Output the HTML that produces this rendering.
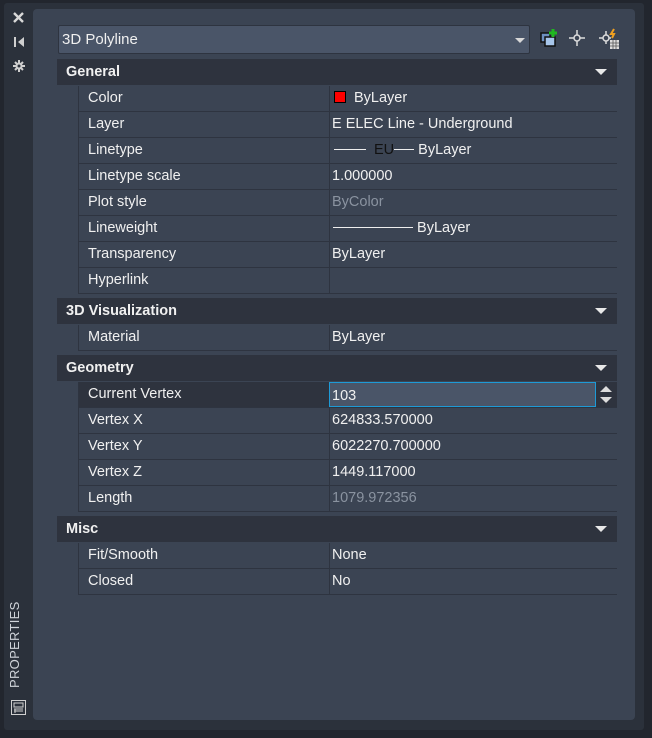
<!DOCTYPE html>
<html><head><style>
*{margin:0;padding:0;box-sizing:border-box}
body{width:652px;height:738px;background:#22262e;font-family:"Liberation Sans",sans-serif;font-size:14.5px;color:#f0f0f0;position:relative;overflow:hidden}
.strip{position:absolute;left:4px;top:3px;width:640px;height:727px;background:#2b313b;border-radius:3px}
.panel{position:absolute;left:33px;top:9px;width:602px;height:711px;background:#3b4453;border-radius:4px}
.a{position:absolute}
.hdr{position:absolute;left:57px;width:560px;height:26px;background:#2e333e;font-weight:bold;line-height:26px;padding-left:9px}
.hdr:after{content:"";position:absolute;right:10px;top:10px;border-left:6px solid transparent;border-right:6px solid transparent;border-top:6px solid #e8e8e8}
.row{position:absolute;left:78px;width:539px;height:26px;border-bottom:1px solid #2e3440;border-left:1px solid #2e3440}
.row .l{position:absolute;left:9px;top:4px}
.row .v{position:absolute;left:250px;top:0;height:25px;border-left:1px solid #2e3440;padding-left:2px;line-height:25px;width:289px}
.g{color:#8a93a0}
</style></head><body>
<div class="strip"></div>
<div class="panel"></div>
<svg class="a" style="left:12px;top:11px" width="14" height="14"><path d="M2 2L11 11M11 2L2 11" stroke="#d8d8d8" stroke-width="2.4"/></svg>
<svg class="a" style="left:13px;top:36px" width="12" height="12"><rect x="1" y="1" width="2" height="10" fill="#cfcfcf"/><path d="M11 1L5 6L11 11Z" fill="#cfcfcf"/></svg>
<svg class="a" style="left:12px;top:59px" width="14" height="14"><g stroke="#cfcfcf" stroke-width="2"><path d="M7 1V13M1 7H13M3 3L11 11M11 3L3 11"/></g><circle cx="7" cy="7" r="3.5" fill="#cfcfcf"/><circle cx="7" cy="7" r="1.5" fill="#2b313b"/></svg>
<div class="a" style="left:7px;top:688px;width:28px;transform:rotate(-90deg);transform-origin:0 0;font-size:13px;color:#d0d4da;letter-spacing:0.3px;white-space:nowrap">PROPERTIES</div>
<svg class="a" style="left:11px;top:700px" width="15" height="15"><rect x="0.5" y="0.5" width="14" height="14" fill="none" stroke="#cfcfcf"/><rect x="3" y="3" width="9" height="4" fill="none" stroke="#cfcfcf"/><path d="M3 9H12M3 11H12M4 9V13" stroke="#cfcfcf"/></svg>
<div class="a" style="left:58px;top:25px;width:472px;height:29px;background:#4a5568;border:1px solid #2e3440;border-radius:2px;line-height:28px;padding-left:3px;font-size:15px">3D Polyline</div>
<div class="a" style="left:515px;top:38px;border-left:5px solid transparent;border-right:5px solid transparent;border-top:5px solid #d8d8d8"></div>
<svg class="a" style="left:539px;top:28px" width="20" height="20"><rect x="2" y="5" width="9" height="9" fill="#6d8fbf" stroke="#111" stroke-width="1.5"/><rect x="6" y="9" width="10" height="9" fill="#a7c6ea" stroke="#111" stroke-width="1.5"/><path d="M14 1V9M10 5H18" stroke="#1fb81f" stroke-width="3"/></svg>
<svg class="a" style="left:568px;top:29px" width="18" height="18"><circle cx="9" cy="9" r="3" fill="none" stroke="#ddd" stroke-width="1.5"/><path d="M9 1V6M9 12V17M1 9H6M12 9H17" stroke="#ddd" stroke-width="1.5"/></svg>
<svg class="a" style="left:598px;top:28px" width="22" height="22"><circle cx="8" cy="10" r="3" fill="none" stroke="#ddd" stroke-width="1.5"/><path d="M8 3V7M8 13V16M1 10H5M11 10H13" stroke="#ddd" stroke-width="1.5"/><path d="M16 1L13 6H16L14 10" stroke="#f0a020" stroke-width="2" fill="none"/><rect x="12" y="12" width="9" height="9" fill="#ddd"/><path d="M12 15H21M12 18H21M15 12V21M18 12V21" stroke="#555" stroke-width="0.8"/></svg>

<div class="hdr" style="top:59px">General</div>
<div class="row" style="top:86px"><span class="l">Color</span><span class="v"><span style="display:inline-block;width:12px;height:12px;background:#f00;border:1px solid #000;vertical-align:-1px;margin-right:8px;margin-left:2px"></span>ByLayer</span></div>
<div class="row" style="top:112px"><span class="l">Layer</span><span class="v">E ELEC Line - Underground</span></div>
<div class="row" style="top:138px"><span class="l">Linetype</span><span class="v"><span style="display:inline-block;width:32px;border-top:1px solid #eee;vertical-align:4px;margin-left:2px"></span><span style="color:#111;margin-left:8px">EU</span><span style="display:inline-block;width:20px;border-top:1px solid #eee;vertical-align:4px"></span> ByLayer</span></div>
<div class="row" style="top:164px"><span class="l">Linetype scale</span><span class="v">1.000000</span></div>
<div class="row" style="top:190px"><span class="l">Plot style</span><span class="v g">ByColor</span></div>
<div class="row" style="top:216px"><span class="l">Lineweight</span><span class="v"><span style="display:inline-block;width:80px;border-top:1px solid #eee;vertical-align:4px;margin-left:1px"></span> ByLayer</span></div>
<div class="row" style="top:242px"><span class="l">Transparency</span><span class="v">ByLayer</span></div>
<div class="row" style="top:268px"><span class="l">Hyperlink</span><span class="v"></span></div>

<div class="hdr" style="top:298px">3D Visualization</div>
<div class="row" style="top:325px"><span class="l">Material</span><span class="v">ByLayer</span></div>

<div class="hdr" style="top:355px">Geometry</div>
<div class="row" style="top:382px;background:#2e333e"><span class="l">Current Vertex</span><span class="v" style="border:none"></span></div>
<div class="a" style="left:329px;top:382px;width:267px;height:25px;background:#4a5568;border:1px solid #1e9ad6;padding:5px 0 0 2px">103</div>
<div class="a" style="left:600px;top:386px;border-left:6px solid transparent;border-right:6px solid transparent;border-bottom:6px solid #ddd"></div>
<div class="a" style="left:600px;top:397px;border-left:6px solid transparent;border-right:6px solid transparent;border-top:6px solid #ddd"></div>
<div class="row" style="top:408px"><span class="l">Vertex X</span><span class="v">624833.570000</span></div>
<div class="row" style="top:434px"><span class="l">Vertex Y</span><span class="v">6022270.700000</span></div>
<div class="row" style="top:460px"><span class="l">Vertex Z</span><span class="v">1449.117000</span></div>
<div class="row" style="top:486px"><span class="l">Length</span><span class="v g">1079.972356</span></div>

<div class="hdr" style="top:516px">Misc</div>
<div class="row" style="top:543px"><span class="l">Fit/Smooth</span><span class="v">None</span></div>
<div class="row" style="top:569px"><span class="l">Closed</span><span class="v">No</span></div>
</body></html>
